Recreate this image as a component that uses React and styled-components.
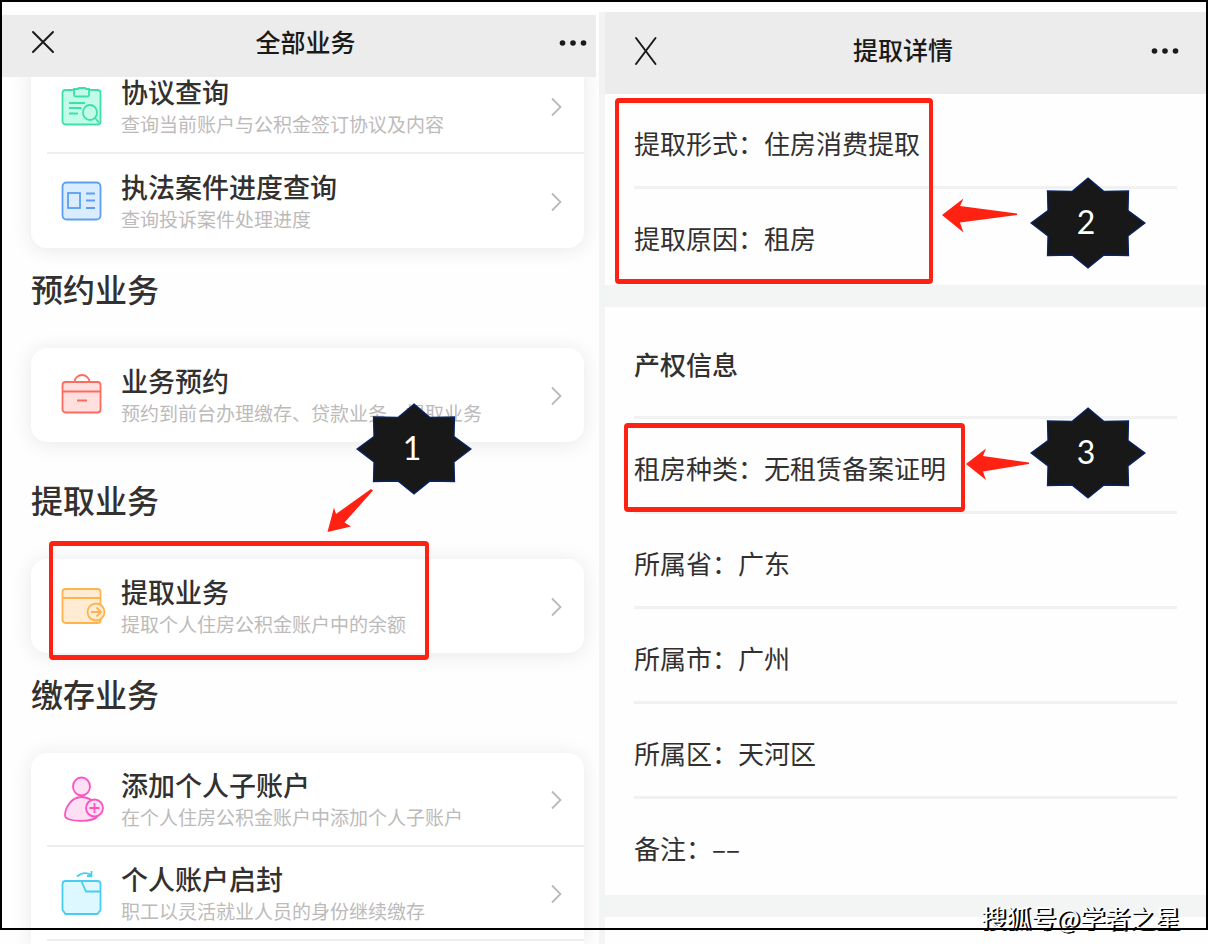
import styled, { createGlobalStyle } from "styled-components";

const GlobalStyle = createGlobalStyle`
  * {
    box-sizing: border-box;
  }

  body {
    margin: 0;
    background-color: #fefefe;
    color: #333030;
    font-family: "Noto Sans CJK SC", sans-serif;
  }

  h1, h2, h3, p, ul, dl, dd {
    margin: 0;
    padding: 0;
  }
`;

const Page = styled.main`
  position: relative;
  display: grid;
  grid-template-columns: 599fr 609fr;
  min-height: 100vh;
  overflow: hidden;
`;

const Frame = styled.div`
  position: absolute;
  inset: 0 0 14px;
  border: 2px solid #000;
  pointer-events: none;
`;

const Watermark = styled.p`
  position: absolute;
  right: 28px;
  bottom: 8px;
  color: #fff;
  font-size: 25px;
  line-height: 38px;
  text-shadow: 1px 1px 0 #000, 2px 1px 0 #000;
`;

const Panel = styled.section`
  position: relative;
  display: flex;
  flex-direction: column;
  min-width: 0;
`;

const BusinessPanel = styled(Panel)`
  padding: 15px 3px 0 2px;
`;

const DetailPanel = styled(Panel)`
  padding: 12px 2px 0 0;
`;

const TopBar = styled.header`
  position: relative;
  z-index: 1;
  display: grid;
  grid-template-columns: 60px 1fr 60px;
  align-items: center;
  flex-shrink: 0;
  height: ${(props) => (props.$tall ? "82px" : "62px")};
  padding: ${(props) => (props.$tall ? "0 27px 4px 34px" : "0 9px 6px 28px")};
  border-left: ${(props) => (props.$tall ? "6px solid #f1f3f3" : "0")};
  background-color: #ececec;
  color: #1a1a1a;

  h1 {
    padding: 0 6px 4px 0;
    text-align: center;
    font-size: 25px;
    font-weight: 500;
    line-height: 32px;
  }
`;

const DetailTopBar = styled(TopBar)`
  padding-left: 28px;
`;

const BarButton = styled.button`
  display: flex;
  justify-self: ${(props) => (props.$end ? "end" : "start")};
  padding: 0;
  border: 0;
  background: none;
  color: inherit;
`;

const Scroll = styled.div`
  display: flex;
  flex: 1;
  flex-direction: column;
  padding: 0 12px 0 29px;
`;

const GroupTitle = styled.h2`
  margin-top: ${(props) => (props.$wide ? "33px" : "16px")};
  margin-bottom: 36px;
  font-size: 32px;
  font-weight: 500;
  line-height: 48px;
`;

const Card = styled.ul`
  flex: ${(props) => (props.$open ? "1" : "none")};
  margin-top: ${(props) => (props.$scrolled ? "-17px" : "0")};
  border-radius: ${(props) => (props.$open ? "16px 16px 0 0" : "16px")};
  background-color: #fff;
  box-shadow: 0 2px 20px rgba(60, 40, 40, 0.1);
  list-style: none;
`;

const Item = styled.li`
  height: 94px;
  padding-left: 16px;

  a {
    display: flex;
    align-items: center;
    height: 100%;
    padding: 2px 22px 0 14px;
    border-bottom: ${(props) => (props.$line ? "2px solid #eee" : "0")};
    color: inherit;
    text-decoration: none;
  }
`;

const ItemText = styled.div`
  flex: 1;
  min-width: 0;
  margin-left: 14px;
  white-space: nowrap;

  h3 {
    font-size: 27px;
    font-weight: 500;
    line-height: 34px;
  }

  p {
    color: #bdbaba;
    font-size: 19px;
    line-height: 30px;
  }
`;

const DetailBody = styled.div`
  flex: 1;
  padding-left: 6px;
  background-color: #f3f5f5;
`;

const Block = styled.div`
  min-height: 27px;
  margin-bottom: ${(props) => (props.$last ? "0" : "22px")};
  padding: 0 29px;
  background-color: #fefefe;
`;

const BlockTitle = styled.h2`
  display: flex;
  align-items: center;
  height: 112px;
  padding-top: 3px;
  border-bottom: 3px solid #f1f1f1;
  font-size: 26px;
  font-weight: 500;
`;

const Field = styled.div`
  display: flex;
  align-items: center;
  height: 95px;
  padding-top: 5px;
  border-bottom: 3px solid #f1f1f1;
  font-size: 26px;
  white-space: nowrap;

  &:last-child {
    height: 96px;
    padding-top: 0;
    border-bottom: 0;
  }
`;

const Highlight = styled.div`
  position: absolute;
  top: ${(props) => props.$top}px;
  left: ${(props) => props.$left}px;
  width: ${(props) => props.$width}px;
  height: ${(props) => props.$height}px;
  border: 5px solid #ff2112;
  border-width: 5px 4px;
  border-radius: 4px;
  pointer-events: none;
`;

const Arrow = styled.svg`
  position: absolute;
  top: ${(props) => props.$top}px;
  left: ${(props) => props.$left}px;
  fill: #ff2112;
`;

const Badge = styled.div`
  position: absolute;
  top: ${(props) => props.$top}px;
  left: ${(props) => props.$left}px;
  display: grid;
  place-items: center;
  width: 116px;
  height: 92px;
  color: #fff;
  font-family: Lato, sans-serif;
  font-size: 32px;
  line-height: 32px;

  svg,
  span {
    grid-area: 1 / 1;
  }

  span {
    padding: 0 4px 2px 0;
  }
`;

function StepBadge({ number, top, left }) {
  return (
    <Badge $top={top} $left={left}>
      <svg width="116" height="92" viewBox="0 0 116 92" aria-hidden="true">
        <path
          d="M58 1 74 14.5 98.5 14 98 33.5 115 46 98 59 98.5 78.5 74 78 58 91 42 78 17.500 78.5 18 59 1 46 18 33.500 17.500 14 42 14.500Z"
          fill="#181818"
          stroke="#06246b"
          strokeWidth="1.300"
        />
      </svg>
      <span>{number}</span>
    </Badge>
  );
}

function CloseIcon({ tall }) {
  return (
    <svg
      width="26"
      height={tall ? 30 : 26}
      viewBox={tall ? "0 0 26 30" : "0 0 26 26"}
      fill="none"
      stroke="currentColor"
      strokeWidth="2"
      strokeLinecap="round"
    >
      <path d={tall ? "M3 2 22.500 28M22.500 2 3 28" : "M3 2 23 22M23 2 3 22"} />
    </svg>
  );
}

function MoreIcon() {
  return (
    <svg width="28" height="8" viewBox="0 0 28 8" fill="currentColor">
      <circle cx="3.500" cy="4" r="2.800" />
      <circle cx="14" cy="4" r="2.800" />
      <circle cx="24.500" cy="4" r="2.800" />
    </svg>
  );
}

function Chevron() {
  return (
    <svg width="12" height="20" viewBox="0 0 12 20" fill="none" stroke="#b9b9b9" strokeWidth="1.800">
      <path d="M2 1.500 10.500 10 2 18.500" />
    </svg>
  );
}

const icons = {
  agreement: {
    stroke: "#3fe0a8",
    fill: "#c2fce8",
    body: (
      <>
        <rect x="1.500" y="6" width="38" height="34.500" rx="3" />
        <path d="M13 5h4q0-1 1-1h6q1 0 1 1h3v6q0 1.500-2 1.500H15q-2 0-2-1.500Z" />
        <path d="M8 19h16M8 24h12.500M8 29.500h9" fill="none" />
        <ellipse cx="29" cy="28.500" rx="7" ry="7.500" />
        <path d="m34 34 4 4.500" />
      </>
    ),
  },
  lawCase: {
    stroke: "#5a9ff2",
    fill: "#dcecff",
    body: (
      <>
        <rect x="1.500" y="3.500" width="38" height="37" rx="4" />
        <rect x="7" y="14" width="12" height="15" />
        <path d="M25 14.500h9M25 21.500h9M25 29h9" />
      </>
    ),
  },
  booking: {
    stroke: "#ff6a60",
    fill: "#ffe0de",
    body: (
      <>
        <path d="M13.500 9a7.500 7 0 0 1 15 0" fill="none" />
        <rect x="1.500" y="9" width="38" height="30.500" rx="3" />
        <path d="M1.500 18.500h38M16 27.500h10" />
      </>
    ),
  },
  withdraw: {
    stroke: "#ffb34d",
    fill: "#ffecd2",
    body: (
      <>
        <rect x="1.500" y="5" width="38" height="34" rx="3" />
        <path d="M1.500 14h38" />
        <circle cx="35" cy="28" r="8.500" />
        <path d="M30 28h10m-4.500-4.500L40 28l-4.500 4.500" fill="none" />
      </>
    ),
  },
  addUser: {
    stroke: "#f854c0",
    fill: "#ffdff4",
    body: (
      <>
        <ellipse cx="20.500" cy="9.500" rx="8.500" ry="9" />
        <path d="M20.500 20C10 20 4 31 4 38.500c0 7 29 7.500 33 0C41 31 31 20 20.500 20Z" />
        <circle cx="33.500" cy="31" r="8.500" />
        <path d="M28.500 31h10M33.500 26v10" />
      </>
    ),
  },
  unseal: {
    stroke: "#48cdf0",
    fill: "#def8ff",
    body: (
      <>
        <path d="M16 5.500q7-6 14.500-1.500M30.500 0v5H26" fill="none" />
        <path d="M4.500 10h32q3 0 3 3v26l-3 4H4.500l-3-4V13q0-3 3-3Z" />
        <path d="M20.500 10.500 25 20.500h14" fill="none" />
      </>
    ),
  },
};

function BusinessIcon({ name }) {
  const { stroke, fill, body } = icons[name];

  return (
    <svg
      width="46"
      height="46"
      viewBox="0 0 46 46"
      overflow="visible"
      stroke={stroke}
      fill={fill}
      strokeWidth="1.800"
      aria-hidden="true"
    >
      {body}
    </svg>
  );
}

const groups = [
  {
    scrolled: true,
    items: [
      { icon: "agreement", name: "协议查询", note: "查询当前账户与公积金签订协议及内容" },
      { icon: "lawCase", name: "执法案件进度查询", note: "查询投诉案件处理进度" },
    ],
  },
  {
    title: "预约业务",
    items: [{ icon: "booking", name: "业务预约", note: "预约到前台办理缴存、贷款业务、提取业务" }],
  },
  {
    title: "提取业务",
    wide: true,
    items: [{ icon: "withdraw", name: "提取业务", note: "提取个人住房公积金账户中的余额" }],
  },
  {
    title: "缴存业务",
    open: true,
    items: [
      { icon: "addUser", name: "添加个人子账户", note: "在个人住房公积金账户中添加个人子账户" },
      { icon: "unseal", name: "个人账户启封", note: "职工以灵活就业人员的身份继续缴存" },
    ],
  },
];

const withdrawFields = [
  ["提取形式", "住房消费提取"],
  ["提取原因", "租房"],
];

const propertyFields = [
  ["租房种类", "无租赁备案证明"],
  ["所属省", "广东"],
  ["所属市", "广州"],
  ["所属区", "天河区"],
  ["备注", "––"],
];

function Group({ group }) {
  const { title, wide, scrolled, open, items } = group;

  return (
    <>
      {title && <GroupTitle $wide={wide}>{title}</GroupTitle>}
      <Card $scrolled={scrolled} $open={open}>
        {items.map((item, index) => (
          <Item key={item.name} $line={open || index < items.length - 1}>
            <a href="#">
              <BusinessIcon name={item.icon} />
              <ItemText>
                <h3>{item.name}</h3>
                <p>{item.note}</p>
              </ItemText>
              <Chevron />
            </a>
          </Item>
        ))}
      </Card>
    </>
  );
}

function Fields({ fields }) {
  return (
    <dl>
      {fields.map(([label, value]) => (
        <Field key={label}>
          <dt>{label}：</dt>
          <dd>{value}</dd>
        </Field>
      ))}
    </dl>
  );
}

function Bar({ title, tall }) {
  const Wrapper = tall ? DetailTopBar : TopBar;

  return (
    <Wrapper $tall={tall}>
      <BarButton aria-label="关闭">
        <CloseIcon tall={tall} />
      </BarButton>
      <h1>{title}</h1>
      <BarButton $end aria-label="更多">
        <MoreIcon />
      </BarButton>
    </Wrapper>
  );
}

function App() {
  return (
    <>
      <GlobalStyle />
      <Page>
        <BusinessPanel>
          <Bar title="全部业务" />
          <Scroll>
            {groups.map((group) => (
              <Group key={group.title || "query"} group={group} />
            ))}
          </Scroll>
          <Highlight $top={541} $left={49} $width={380} $height={119} />
          <Arrow $top={488} $left={326} width="48" height="45" viewBox="0 0 48 45">
            <path d="M1.500 44 8 19.500 10 26 45 1 47 2.500 18.500 34.500 25 38.500Z" />
          </Arrow>
          <StepBadge number="1" top={403} left={356} />
        </BusinessPanel>

        <DetailPanel>
          <Bar title="提取详情" tall />
          <DetailBody>
            <Block>
              <Fields fields={withdrawFields} />
            </Block>
            <Block>
              <BlockTitle>产权信息</BlockTitle>
              <Fields fields={propertyFields} />
            </Block>
            <Block $last />
          </DetailBody>
          <Highlight $top={98} $left={16} $width={318} $height={186} />
          <Arrow $top={198} $left={342} width="77" height="36" viewBox="0 0 77 36">
            <path d="M1 17 22.500 .5 19 8 76 15.500V17L19 24.500 22.500 34.500Z" />
          </Arrow>
          <StepBadge number="2" top={177} left={431} />
          <Highlight $top={423} $left={25} $width={341} $height={89} />
          <Arrow $top={448} $left={366} width="65" height="34" viewBox="0 0 65 34">
            <path d="M1 16 21 .5 18 8 64 14.500V16L18 23.500 21 32Z" />
          </Arrow>
          <StepBadge number="3" top={407} left={431} />
        </DetailPanel>

        <Watermark>搜狐号@学者之星</Watermark>
        <Frame />
      </Page>
    </>
  );
}

export default App;
